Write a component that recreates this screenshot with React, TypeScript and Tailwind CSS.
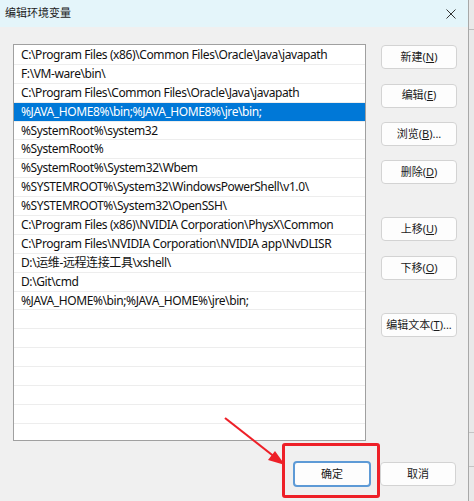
import type { ReactNode } from "react";

const PATHS = [
  "C:\\Program Files (x86)\\Common Files\\Oracle\\Java\\javapath",
  "F:\\VM-ware\\bin\\",
  "C:\\Program Files\\Common Files\\Oracle\\Java\\javapath",
  "%JAVA_HOME8%\\bin;%JAVA_HOME8%\\jre\\bin;",
  "%SystemRoot%\\system32",
  "%SystemRoot%",
  "%SystemRoot%\\System32\\Wbem",
  "%SYSTEMROOT%\\System32\\WindowsPowerShell\\v1.0\\",
  "%SYSTEMROOT%\\System32\\OpenSSH\\",
  "C:\\Program Files (x86)\\NVIDIA Corporation\\PhysX\\Common",
  "C:\\Program Files\\NVIDIA Corporation\\NVIDIA app\\NvDLISR",
  "D:\\运维-远程连接工具\\xshell\\",
  "D:\\Git\\cmd",
  "%JAVA_HOME%\\bin;%JAVA_HOME%\\jre\\bin;",
];

const SELECTED = 3;
const TOTAL_ROWS = 21;

const FONT = {
  fontFamily: '"Segoe UI", "Noto Sans", "Noto Sans CJK SC", sans-serif',
};

function Btn({ label, hot, tail, className = "" }: { label: string; hot?: string; tail?: string; className?: string }) {
  return (
    <button
      className={`flex h-[24px] w-[76px] items-center justify-center rounded-[4px] border border-[#d3d3d3] bg-[#fdfdfd] text-[11px] text-[#1b1b1b] ${className}`}
    >
      {label}
      {hot && (
        <>
          (<span className="underline">{hot}</span>)
        </>
      )}
      {tail}
    </button>
  );
}

function Row({ children, selected }: { children: ReactNode; selected?: boolean }) {
  return (
    <div
      className={`flex h-[18.9px] items-center whitespace-nowrap border-b border-[#ededed] pl-[7px] text-[12px] leading-none tracking-[-0.4px] ${
        selected ? "bg-[#0078d7] text-white" : "text-[#111]"
      }`}
    >
      {children}
    </div>
  );
}

export default function App() {
  const empty = TOTAL_ROWS - PATHS.length;
  return (
    <div className="relative flex h-[501px] w-[474px] overflow-hidden bg-[#e9e9e9]" style={FONT}>
      <div className="flex h-full w-[469px] flex-col border-r border-[#a8a8a8] bg-[#f0f0f0]">
        {/* 标题栏 */}
        <div className="flex h-[27px] items-center justify-between bg-[#e4f5fa] pl-[5px] pr-[12px]">
          <span className="text-[11px] text-[#222]">编辑环境变量</span>
          <svg width="10" height="10" viewBox="0 0 10 10" className="text-[#333]">
            <path d="M0.5 0.5L9.5 9.5M9.5 0.5L0.5 9.5" stroke="currentColor" strokeWidth="1" />
          </svg>
        </div>

        <div className="flex pl-[13px] pt-[17px]">
          {/* 路径列表 */}
          <div className="h-[397px] w-[353px] overflow-hidden border border-[#a0a0a0] bg-white pt-[1px]">
            {PATHS.map((p, i) => (
              <Row key={i} selected={i === SELECTED}>
                {p}
              </Row>
            ))}
            {Array.from({ length: empty }).map((_, i) => (
              <Row key={`e${i}`}>{""}</Row>
            ))}
          </div>

          {/* 右侧按钮 */}
          <div className="ml-[15px] flex flex-col pt-[1px]">
            <Btn label="新建" hot="N" />
            <Btn label="编辑" hot="E" className="mt-[14.5px]" />
            <Btn label="浏览" hot="B" tail="..." className="mt-[14.5px]" />
            <Btn label="删除" hot="D" className="mt-[14px]" />
            <Btn label="上移" hot="U" className="mt-[33px]" />
            <Btn label="下移" hot="O" className="mt-[15px]" />
            <Btn label="编辑文本" hot="T" tail="..." className="mt-[33px]" />
          </div>
        </div>

        {/* 底部按钮 */}
        <div className="flex justify-end pr-[12px] pt-[20px]">
          <button className="flex h-[26px] w-[78px] items-center justify-center rounded-[4px] border-2 border-[#5d9ad6] bg-[#fdfdfd] text-[11px] text-[#1b1b1b]">
            确定
          </button>
          <Btn label="取消" className="ml-[9px] mt-[1px]" />
        </div>
      </div>

      {/* 背后窗口的边缘 */}
      <div className="flex flex-1 flex-col">
        <div className="h-[30px] border-b border-[#bdbdbd]" />
        <div className="h-[403px] border-b border-[#c4c4c4]" />
        <div className="h-[34px] border-b border-[#c4c4c4]" />
      </div>

      {/* 标注：红框与箭头 */}
      <div className="pointer-events-none absolute left-[282px] top-[443px] h-[55px] w-[98px] rounded-[3px] border-[3px] border-[#ee2028]" />
      <svg className="pointer-events-none absolute left-0 top-0" width="474" height="501">
        <line x1="225" y1="418" x2="276" y2="458" stroke="#ee2028" strokeWidth="2.2" />
        <path d="M285 465L268 460L275 451Z" fill="#ee2028" />
      </svg>
    </div>
  );
}
